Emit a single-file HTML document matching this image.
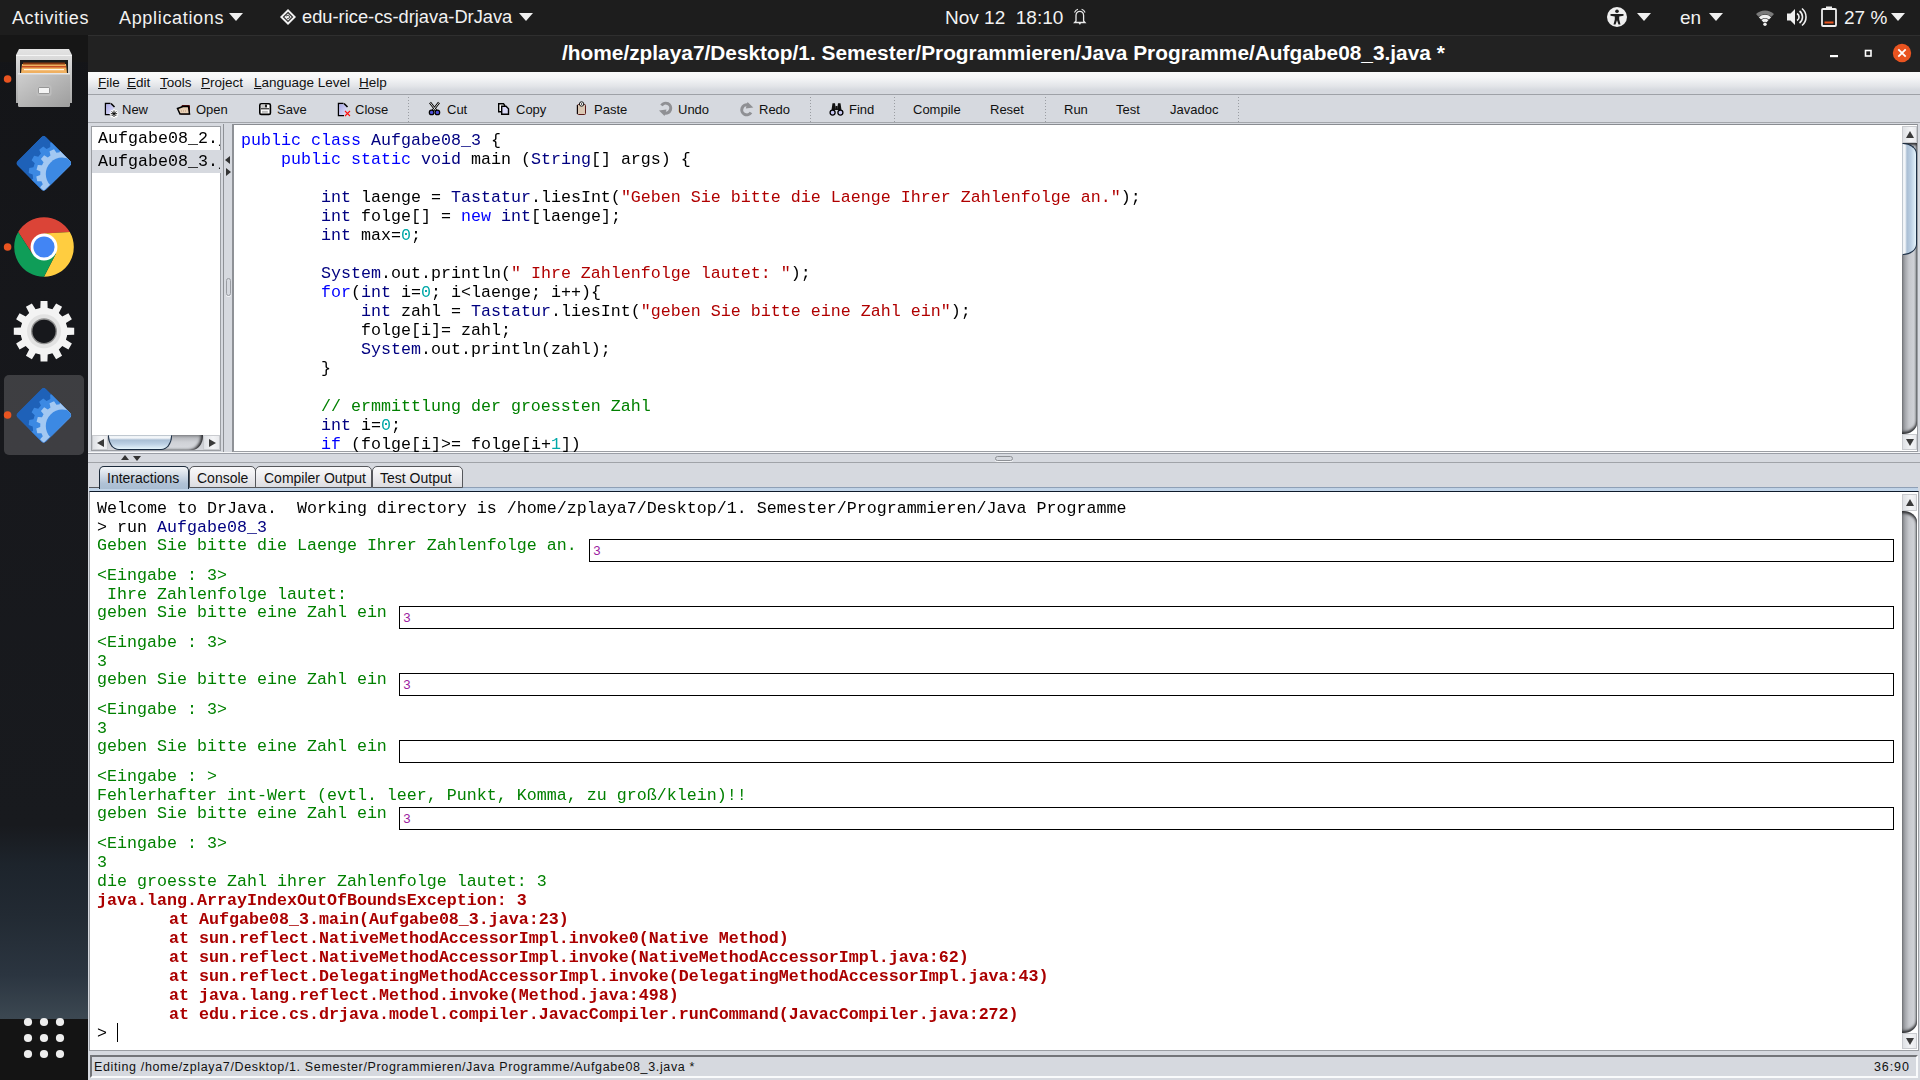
<!DOCTYPE html>
<html><head><meta charset="utf-8">
<style>
*{box-sizing:border-box;margin:0;padding:0}
html,body{width:1920px;height:1080px;overflow:hidden;background:#16171b;font-family:"Liberation Sans",sans-serif}
.a{position:absolute}
.t{position:absolute;white-space:pre;line-height:1}
#top{left:0;top:0;width:1920px;height:35px;background:#1d1d1d;color:#f2f2f2}
#dock{left:0;top:35px;width:88px;height:1045px;background:linear-gradient(#141518 0px,#17181c 400px,#181a1e 790px,#1d242c 830px,#222a33 880px,#2b3540 940px,#3c4852 984px)}
#title{left:88px;top:35px;width:1832px;height:37px;background:#222;border-top:1px solid #2f2f2f}
#win{left:88px;top:72px;width:1832px;height:1008px;background:#d6d9df}
.mono{font-family:"Liberation Mono",monospace;will-change:transform}
.tri{position:absolute;width:0;height:0;border-left:7px solid transparent;border-right:7px solid transparent;border-top:8px solid #f0f0f0}
.code{font-size:16.67px;line-height:19px;color:#000}
.code i,.ia i{font-style:normal}
i.k{color:#0000ff} i.y{color:#000080} i.s{color:#b00000} i.n{color:#00a8a8} i.c{color:#008000}
.ia{font-size:16.67px;line-height:19px;height:19px;color:#000}
i.g{color:#008000} i.r{color:#aa0000;font-weight:bold}
.ibox{height:23px;border:1px solid #000;background:#fff}
.ibox span{position:absolute;left:3px;top:4.5px;font-family:"Liberation Mono",monospace;font-size:13px;line-height:14px;color:#9b1aa0}
.tab{top:466px;height:22px;border:1px solid #55575b;border-radius:5px 5px 0 0;background:linear-gradient(#fafafb,#ececef 50%,#dcdde1)}
.tab.sel{height:23px;border-color:#1b2a3a;border-bottom:none;background:linear-gradient(#f4f6f8 0%,#d5dee8 35%,#b0c2d6 75%,#a9bdd2 100%)}
.sbbtn{background:linear-gradient(90deg,#dfe1e5,#f3f4f6 60%,#e9eaed);border:1px solid #c9cbcf}
.sbtrack.v{background:linear-gradient(90deg,#77797d 0,#a9abb0 3px,#c9cbd0 7px,#d5d7dc 100%)}
.sbtrack.h{background:linear-gradient(#77797d 0,#a9abb0 3px,#c9cbd0 7px,#d5d7dc 100%)}
.thumbv{border:1px solid #1c2f45;border-left:1px solid #c0c8d0;border-radius:0 14px 14px 0/0 11px 11px 0;background:linear-gradient(90deg,#eef2f6 0,#f4f7fa 2px,#a9bed4 4px,#bcd0e4 8px,#e6f4fb 100%)}
.thumbh{border:1px solid #1c2f45;border-top:1px solid #c0c8d0;border-radius:0 0 11px 11px/0 0 14px 14px;background:linear-gradient(#eef2f6 0,#f4f7fa 2px,#a9bed4 4px,#bcd0e4 8px,#e6f4fb 100%)}
.tu,.td,.tl,.tr{position:absolute;width:0;height:0}
.tu{left:3px;top:4px;border-left:4px solid transparent;border-right:4px solid transparent;border-bottom:7px solid #3a3a3a}
.td{left:3px;top:4px;border-left:4px solid transparent;border-right:4px solid transparent;border-top:7px solid #3a3a3a}
.tl{left:4px;top:3px;border-top:4px solid transparent;border-bottom:4px solid transparent;border-right:7px solid #3a3a3a}
.tr{left:5px;top:3px;border-top:4px solid transparent;border-bottom:4px solid transparent;border-left:7px solid #3a3a3a}
.chan{background:linear-gradient(90deg,#77797d 0,#a3a5aa 3px,#c6c8cd 7px,#d5d7dc 100%);box-shadow:inset -1px 3px 3px -1px #2a2b2e, inset -1px -3px 3px -1px #2a2b2e}
</style></head><body>
<!-- TOP BAR -->
<div id="top" class="a">
  <div class="t" style="left:12px;top:9px;font-size:18px;letter-spacing:0.6px">Activities</div>
  <div class="t" style="left:119px;top:9px;font-size:18px;letter-spacing:0.67px">Applications</div>
  <div class="tri" style="left:229px;top:13px"></div>
  <div class="t" style="left:302px;top:8px;font-size:18.3px">edu-rice-cs-drjava-DrJava</div>
  <div class="tri" style="left:519px;top:13px"></div>
  <div class="t" style="left:945px;top:8px;font-size:19px">Nov 12  18:10</div>
  <div class="t" style="left:1680px;top:8px;font-size:19px">en</div>
  <div class="tri" style="left:1637px;top:13px"></div>
  <div class="tri" style="left:1709px;top:13px"></div>
  <div class="t" style="left:1844px;top:8px;font-size:19px">27 %</div>
  <div class="tri" style="left:1891px;top:13px"></div>
</div>
<div id="dock" class="a"></div>
<div class="a" style="left:0;top:35px;width:88px;height:27px;background:#161616"></div>
<svg class="a" style="left:0;top:35px" width="88" height="1045" viewBox="0 35 88 1045">
<rect x="4" y="375" width="80" height="80" rx="5" fill="#ffffff" fill-opacity="0.17"/>
<circle cx="7.6" cy="79" r="3.8" fill="#e95420"/>
<circle cx="7.6" cy="247" r="3.8" fill="#e95420"/>
<circle cx="7.6" cy="415" r="3.8" fill="#e95420"/>
<defs><linearGradient id="cab" x1="0" y1="0" x2="0" y2="1"><stop offset="0" stop-color="#e4e4e4"/><stop offset="1" stop-color="#a9a9a9"/></linearGradient>
<linearGradient id="drw" x1="0" y1="0" x2="1" y2="1"><stop offset="0" stop-color="#cfcfcf"/><stop offset="1" stop-color="#9d9d9d"/></linearGradient></defs>
<path d="M19 49 H69 L72 55 V103 H16 V55 Z" fill="url(#cab)"/>
<rect x="16" y="55" width="56" height="1" fill="#f4f4f4"/>
<rect x="20" y="60" width="48" height="13" fill="#1b1b1b"/>
<path d="M22 64 H66 L67 73 H21 Z" fill="#f0b060"/>
<rect x="23" y="62.5" width="42" height="2" fill="#8a3a10"/>
<rect x="22" y="66" width="44" height="1.5" fill="#c64a20"/>
<rect x="24" y="69" width="40" height="1.2" fill="#fff7e8"/>
<rect x="18" y="73" width="52" height="34" rx="1.5" fill="url(#drw)"/>
<rect x="18" y="73" width="52" height="1.5" fill="#e6e6e6"/>
<rect x="36.5" y="85" width="15" height="11" rx="2.5" fill="#bdbdbd"/>
<rect x="38.5" y="87.5" width="11" height="6" rx="1" fill="#f4f4f4" stroke="#6a6a6a" stroke-width="0.6"/>
<clipPath id="dm1"><rect x="23.45" y="142.95" width="40.50" height="40.50" rx="3.5" transform="rotate(45 43.70 163.20)"/></clipPath><g clip-path="url(#dm1)"><rect x="23.45" y="142.95" width="40.50" height="40.50" rx="3.5" transform="rotate(45 43.70 163.20)" fill="#1e61b8"/><path d="M61.58 144.51 L63.08 140.51 L68.30 141.06 L68.94 145.28 L72.92 146.52 L75.83 143.40 L80.45 145.90 L79.41 150.04 L82.62 152.71 L86.50 150.94 L89.81 155.03 L87.27 158.45 L89.21 162.14 L93.47 161.99 L94.97 167.03 L91.31 169.23 L91.69 173.38 L95.69 174.88 L95.14 180.10 L90.92 180.74 L89.68 184.72 L92.80 187.63 L90.30 192.25 L86.16 191.21 L83.49 194.42 L85.26 198.30 L81.17 201.61 L77.75 199.07 L74.06 201.01 L74.21 205.27 L69.17 206.77 L66.97 203.11 L62.82 203.49 L61.32 207.49 L56.10 206.94 L55.46 202.72 L51.48 201.48 L48.57 204.60 L43.95 202.10 L44.99 197.96 L41.78 195.29 L37.90 197.06 L34.59 192.97 L37.13 189.55 L35.19 185.86 L30.93 186.01 L29.43 180.97 L33.09 178.77 L32.71 174.62 L28.71 173.12 L29.26 167.90 L33.48 167.26 L34.72 163.28 L31.60 160.37 L34.10 155.75 L38.24 156.79 L40.91 153.58 L39.14 149.70 L43.23 146.39 L46.65 148.93 L50.34 146.99 L50.19 142.73 L55.23 141.23 L57.43 144.89 Z" fill="#3c89e3"/><path d="M59.71 152.14 L60.61 148.05 L65.59 148.22 L66.21 152.37 L69.44 153.23 L72.03 149.93 L76.44 152.25 L75.20 156.25 L77.74 158.42 L81.50 156.58 L84.47 160.58 L81.61 163.65 L82.96 166.71 L87.15 166.68 L88.09 171.57 L84.18 173.10 L84.06 176.44 L87.85 178.23 L86.58 183.04 L82.40 182.72 L80.84 185.68 L83.48 188.94 L80.24 192.73 L76.61 190.62 L73.93 192.61 L74.89 196.69 L70.33 198.70 L67.97 195.23 L64.69 195.86 L63.79 199.95 L58.81 199.78 L58.19 195.63 L54.96 194.77 L52.37 198.07 L47.96 195.75 L49.20 191.75 L46.66 189.58 L42.90 191.42 L39.93 187.42 L42.79 184.35 L41.44 181.29 L37.25 181.32 L36.31 176.43 L40.22 174.90 L40.34 171.56 L36.55 169.77 L37.82 164.96 L42.00 165.28 L43.56 162.32 L40.92 159.06 L44.16 155.27 L47.79 157.38 L50.47 155.39 L49.51 151.31 L54.07 149.30 L56.43 152.77 Z" fill="#a3c8f2"/><circle cx="62.2" cy="174.0" r="16.4" fill="#3c89e3"/><path d="M13.7 164.4 L43.7 192.4 L73.7 164.4" fill="none" stroke="#2d70c9" stroke-width="2.4"/></g>
<path d="M18.19 232.10 A29.8 29.8 0 0 1 69.81 232.10 L44.00 233.40 L44 247 L32.22 253.80 Z" fill="#db4437"/><path d="M69.81 232.10 A29.8 29.8 0 0 1 44.00 276.80 L55.78 253.80 L44 247 L44.00 233.40 Z" fill="#ffcd40"/><path d="M44.00 276.80 A29.8 29.8 0 0 1 18.19 232.10 L32.22 253.80 L44 247 L55.78 253.80 Z" fill="#0f9d58"/><circle cx="44" cy="247" r="13.4" fill="#fff"/><circle cx="44" cy="247" r="10.6" fill="#4285f4"/>
<path d="M40.32 308.09 L40.56 301.10 L47.44 301.10 L47.68 308.09 L52.42 309.36 L56.12 303.42 L62.08 306.86 L58.79 313.04 L62.26 316.51 L68.44 313.22 L71.88 319.18 L65.94 322.88 L67.21 327.62 L74.20 327.86 L74.20 334.74 L67.21 334.98 L65.94 339.72 L71.88 343.42 L68.44 349.38 L62.26 346.09 L58.79 349.56 L62.08 355.74 L56.12 359.18 L52.42 353.24 L47.68 354.51 L47.44 361.50 L40.56 361.50 L40.32 354.51 L35.58 353.24 L31.88 359.18 L25.92 355.74 L29.21 349.56 L25.74 346.09 L19.56 349.38 L16.12 343.42 L22.06 339.72 L20.79 334.98 L13.80 334.74 L13.80 327.86 L20.79 327.62 L22.06 322.88 L16.12 319.18 L19.56 313.22 L25.74 316.51 L29.21 313.04 L25.92 306.86 L31.88 303.42 L35.58 309.36 Z" fill="#f3f3f3"/>
<circle cx="44" cy="331.3" r="23" fill="#f3f3f3"/>
<circle cx="44" cy="331.3" r="17" fill="#e2e2e2"/>
<circle cx="44" cy="331.3" r="13" fill="#8e8e8e"/>
<circle cx="44" cy="331.3" r="11.6" fill="#17181c"/>
<clipPath id="dm2"><rect x="23.45" y="394.95" width="40.50" height="40.50" rx="3.5" transform="rotate(45 43.70 415.20)"/></clipPath><g clip-path="url(#dm2)"><rect x="23.45" y="394.95" width="40.50" height="40.50" rx="3.5" transform="rotate(45 43.70 415.20)" fill="#1e61b8"/><path d="M61.58 396.51 L63.08 392.51 L68.30 393.06 L68.94 397.28 L72.92 398.52 L75.83 395.40 L80.45 397.90 L79.41 402.04 L82.62 404.71 L86.50 402.94 L89.81 407.03 L87.27 410.45 L89.21 414.14 L93.47 413.99 L94.97 419.03 L91.31 421.23 L91.69 425.38 L95.69 426.88 L95.14 432.10 L90.92 432.74 L89.68 436.72 L92.80 439.63 L90.30 444.25 L86.16 443.21 L83.49 446.42 L85.26 450.30 L81.17 453.61 L77.75 451.07 L74.06 453.01 L74.21 457.27 L69.17 458.77 L66.97 455.11 L62.82 455.49 L61.32 459.49 L56.10 458.94 L55.46 454.72 L51.48 453.48 L48.57 456.60 L43.95 454.10 L44.99 449.96 L41.78 447.29 L37.90 449.06 L34.59 444.97 L37.13 441.55 L35.19 437.86 L30.93 438.01 L29.43 432.97 L33.09 430.77 L32.71 426.62 L28.71 425.12 L29.26 419.90 L33.48 419.26 L34.72 415.28 L31.60 412.37 L34.10 407.75 L38.24 408.79 L40.91 405.58 L39.14 401.70 L43.23 398.39 L46.65 400.93 L50.34 398.99 L50.19 394.73 L55.23 393.23 L57.43 396.89 Z" fill="#3c89e3"/><path d="M59.71 404.14 L60.61 400.05 L65.59 400.22 L66.21 404.37 L69.44 405.23 L72.03 401.93 L76.44 404.25 L75.20 408.25 L77.74 410.42 L81.50 408.58 L84.47 412.58 L81.61 415.65 L82.96 418.71 L87.15 418.68 L88.09 423.57 L84.18 425.10 L84.06 428.44 L87.85 430.23 L86.58 435.04 L82.40 434.72 L80.84 437.68 L83.48 440.94 L80.24 444.73 L76.61 442.62 L73.93 444.61 L74.89 448.69 L70.33 450.70 L67.97 447.23 L64.69 447.86 L63.79 451.95 L58.81 451.78 L58.19 447.63 L54.96 446.77 L52.37 450.07 L47.96 447.75 L49.20 443.75 L46.66 441.58 L42.90 443.42 L39.93 439.42 L42.79 436.35 L41.44 433.29 L37.25 433.32 L36.31 428.43 L40.22 426.90 L40.34 423.56 L36.55 421.77 L37.82 416.96 L42.00 417.28 L43.56 414.32 L40.92 411.06 L44.16 407.27 L47.79 409.38 L50.47 407.39 L49.51 403.31 L54.07 401.30 L56.43 404.77 Z" fill="#a3c8f2"/><circle cx="62.2" cy="426.0" r="16.4" fill="#3c89e3"/><path d="M13.7 416.4 L43.7 444.4 L73.7 416.4" fill="none" stroke="#2d70c9" stroke-width="2.4"/></g>
<rect x="0" y="1019" width="88" height="61" fill="#141414"/>
<circle cx="28" cy="1022" r="4.1" fill="#eeeeee"/>
<circle cx="44" cy="1022" r="4.1" fill="#eeeeee"/>
<circle cx="60" cy="1022" r="4.1" fill="#eeeeee"/>
<circle cx="28" cy="1038" r="4.1" fill="#eeeeee"/>
<circle cx="44" cy="1038" r="4.1" fill="#eeeeee"/>
<circle cx="60" cy="1038" r="4.1" fill="#eeeeee"/>
<circle cx="28" cy="1054" r="4.1" fill="#eeeeee"/>
<circle cx="44" cy="1054" r="4.1" fill="#eeeeee"/>
<circle cx="60" cy="1054" r="4.1" fill="#eeeeee"/>
</svg>
<div id="title" class="a">
  <div class="t" style="left:474px;top:7px;font-size:20.85px;font-weight:bold;color:#fff">/home/zplaya7/Desktop/1. Semester/Programmieren/Java Programme/Aufgabe08_3.java *</div>
</div>
<div id="win" class="a">
</div>
<div class="a" style="left:88px;top:72px;width:1832px;height:22px;background:linear-gradient(#fafbfb 0,#f6f7f8 25%,#e2e4e8 65%,#d6d9df 82%,#d6d9df 100%)"></div>
<div class="a" style="left:88px;top:94px;width:1832px;height:1px;background:#9ea1a7"></div>
<div class="t" style="left:98px;top:76px;font-size:13.5px;color:#111"><u>F</u>ile</div>
<div class="t" style="left:127px;top:76px;font-size:13.5px;color:#111"><u>E</u>dit</div>
<div class="t" style="left:160px;top:76px;font-size:13.5px;color:#111"><u>T</u>ools</div>
<div class="t" style="left:201px;top:76px;font-size:13.5px;color:#111"><u>P</u>roject</div>
<div class="t" style="left:254px;top:76px;font-size:13.5px;color:#111"><u>L</u>anguage Level</div>
<div class="t" style="left:359px;top:76px;font-size:13.5px;color:#111"><u>H</u>elp</div>
<div class="a" style="left:88px;top:122px;width:1832px;height:1px;background:#a3a6ab"></div>
<div class="a" style="left:408px;top:97px;width:1px;height:25px;background:repeating-linear-gradient(#9a9da2 0 1px,transparent 1px 3px)"></div>
<div class="a" style="left:810px;top:97px;width:1px;height:25px;background:repeating-linear-gradient(#9a9da2 0 1px,transparent 1px 3px)"></div>
<div class="a" style="left:894px;top:97px;width:1px;height:25px;background:repeating-linear-gradient(#9a9da2 0 1px,transparent 1px 3px)"></div>
<div class="a" style="left:1045px;top:97px;width:1px;height:25px;background:repeating-linear-gradient(#9a9da2 0 1px,transparent 1px 3px)"></div>
<div class="a" style="left:1238px;top:97px;width:1px;height:25px;background:repeating-linear-gradient(#9a9da2 0 1px,transparent 1px 3px)"></div>
<div class="t" style="left:122px;top:103px;font-size:13px;color:#111">New</div>
<div class="t" style="left:196px;top:103px;font-size:13px;color:#111">Open</div>
<div class="t" style="left:277px;top:103px;font-size:13px;color:#111">Save</div>
<div class="t" style="left:355px;top:103px;font-size:13px;color:#111">Close</div>
<div class="t" style="left:447px;top:103px;font-size:13px;color:#111">Cut</div>
<div class="t" style="left:516px;top:103px;font-size:13px;color:#111">Copy</div>
<div class="t" style="left:594px;top:103px;font-size:13px;color:#111">Paste</div>
<div class="t" style="left:678px;top:103px;font-size:13px;color:#111">Undo</div>
<div class="t" style="left:759px;top:103px;font-size:13px;color:#111">Redo</div>
<div class="t" style="left:849px;top:103px;font-size:13px;color:#111">Find</div>
<div class="t" style="left:913px;top:103px;font-size:13px;color:#111">Compile</div>
<div class="t" style="left:990px;top:103px;font-size:13px;color:#111">Reset</div>
<div class="t" style="left:1064px;top:103px;font-size:13px;color:#111">Run</div>
<div class="t" style="left:1116px;top:103px;font-size:13px;color:#111">Test</div>
<div class="t" style="left:1170px;top:103px;font-size:13px;color:#111">Javadoc</div>
<div class="a" style="left:91px;top:126px;width:130px;height:325px;border:1px solid #9b9ea3;background:#fff"></div>
<div class="a" style="left:92px;top:150px;width:129px;height:23px;background:#d6d9df"></div>
<div class="a" style="left:92px;top:127px;width:128px;height:300px;overflow:hidden"><div class="t mono" style="left:6px;top:4px;font-size:16.67px;color:#000">Aufgabe08_2.java</div><div class="t mono" style="left:6px;top:27px;font-size:16.67px;color:#000">Aufgabe08_3.java</div></div>

<div class="a" style="left:223px;top:124px;width:1px;height:329px;background:#8e9196"></div>
<div class="a" style="left:226px;top:278px;width:5px;height:18px;border:1px solid #9a9da3;border-radius:3px;box-shadow:0 1px 0 #f4f5f7"></div>
<div class="a" style="left:995px;top:456px;width:18px;height:5px;border:1px solid #8e9196;border-radius:3px;box-shadow:0 1px 0 #f4f5f7"></div>
<div class="a" style="left:232px;top:124px;width:1686px;height:328px;border:1px solid #9b9ea3;border-left:2px solid #8e9196;border-top-color:#8a8d92;background:#fff"></div>
<div class="a" style="left:88px;top:452px;width:1832px;height:1px;background:#f7f8f9"></div>
<div class="a" style="left:88px;top:453px;width:1832px;height:1px;background:#9a9ea6"></div>
<div class="a" style="left:88px;top:462px;width:1832px;height:1px;background:#a0a3a8"></div>
<div class="a" style="left:89px;top:491px;width:1830px;height:560px;border:1px solid #9b9ea3;border-top:1px solid #0f1b2b;background:#fff"></div>
<div class="a" style="left:90px;top:1055px;width:1828px;height:23px;border-top:2px solid #737579;border-left:2px solid #737579;border-right:2px solid #f9fafb;border-bottom:2px solid #f9fafb;background:#d6d9df"></div>

<div class="t" style="left:94px;top:1061px;font-size:12.5px;letter-spacing:0.64px;color:#111">Editing /home/zplaya7/Desktop/1. Semester/Programmieren/Java Programme/Aufgabe08_3.java *</div>
<div class="t" style="left:1874px;top:1061px;font-size:12.5px;letter-spacing:0.9px;color:#111">36:90</div>
<div class="a" style="left:233px;top:125px;width:1669px;height:327px;overflow:hidden"><pre class="mono code" style="position:absolute;left:8px;top:6px"><i class="k">public</i> <i class="k">class</i> <i class="y">Aufgabe08_3</i> {
    <i class="k">public</i> <i class="k">static</i> <i class="y">void</i> main (<i class="y">String</i>[] args) {

        <i class="y">int</i> laenge = <i class="y">Tastatur</i>.liesInt(<i class="s">"Geben Sie bitte die Laenge Ihrer Zahlenfolge an."</i>);
        <i class="y">int</i> folge[] = <i class="k">new</i> <i class="y">int</i>[laenge];
        <i class="y">int</i> max=<i class="n">0</i>;

        <i class="y">System</i>.out.println(<i class="s">" Ihre Zahlenfolge lautet: "</i>);
        <i class="k">for</i>(<i class="y">int</i> i=<i class="n">0</i>; i&lt;laenge; i++){
            <i class="y">int</i> zahl = <i class="y">Tastatur</i>.liesInt(<i class="s">"geben Sie bitte eine Zahl ein"</i>);
            folge[i]= zahl;
            <i class="y">System</i>.out.println(zahl);
        }

        <i class="c">// ermmittlung der groessten Zahl</i>
        <i class="y">int</i> i=<i class="n">0</i>;
        <i class="k">if</i> (folge[i]&gt;= folge[i+<i class="n">1</i>])</pre></div>
<div class="t mono ia" style="left:97px;top:499px">Welcome to DrJava.  Working directory is /home/zplaya7/Desktop/1. Semester/Programmieren/Java Programme</div>
<div class="t mono ia" style="left:97px;top:518px">&gt; run <i class="y">Aufgabe08_3</i></div>
<div class="t mono ia" style="left:97px;top:536px"><i class="g">Geben Sie bitte die Laenge Ihrer Zahlenfolge an.</i></div>
<div class="a ibox" style="left:589px;top:539px;width:1305px"><span>3</span></div>
<div class="t mono ia" style="left:97px;top:566px"><i class="g">&lt;Eingabe : 3&gt;</i></div>
<div class="t mono ia" style="left:97px;top:585px"><i class="g"> Ihre Zahlenfolge lautet: </i></div>
<div class="t mono ia" style="left:97px;top:603px"><i class="g">geben Sie bitte eine Zahl ein </i></div>
<div class="a ibox" style="left:399px;top:606px;width:1495px"><span>3</span></div>
<div class="t mono ia" style="left:97px;top:633px"><i class="g">&lt;Eingabe : 3&gt;</i></div>
<div class="t mono ia" style="left:97px;top:652px"><i class="g">3</i></div>
<div class="t mono ia" style="left:97px;top:670px"><i class="g">geben Sie bitte eine Zahl ein </i></div>
<div class="a ibox" style="left:399px;top:673px;width:1495px"><span>3</span></div>
<div class="t mono ia" style="left:97px;top:700px"><i class="g">&lt;Eingabe : 3&gt;</i></div>
<div class="t mono ia" style="left:97px;top:719px"><i class="g">3</i></div>
<div class="t mono ia" style="left:97px;top:737px"><i class="g">geben Sie bitte eine Zahl ein </i></div>
<div class="a ibox" style="left:399px;top:740px;width:1495px"><span></span></div>
<div class="t mono ia" style="left:97px;top:767px"><i class="g">&lt;Eingabe : &gt;</i></div>
<div class="t mono ia" style="left:97px;top:786px"><i class="g">Fehlerhafter int-Wert (evtl. leer, Punkt, Komma, zu groß/klein)!!</i></div>
<div class="t mono ia" style="left:97px;top:804px"><i class="g">geben Sie bitte eine Zahl ein </i></div>
<div class="a ibox" style="left:399px;top:807px;width:1495px"><span>3</span></div>
<div class="t mono ia" style="left:97px;top:834px"><i class="g">&lt;Eingabe : 3&gt;</i></div>
<div class="t mono ia" style="left:97px;top:853px"><i class="g">3</i></div>
<div class="t mono ia" style="left:97px;top:872px"><i class="g">die groesste Zahl ihrer Zahlenfolge lautet: 3</i></div>
<div class="t mono ia" style="left:97px;top:891px"><i class="r">java.lang.ArrayIndexOutOfBoundsException: 3</i></div>
<div class="t mono ia" style="left:97px;top:910px"><i class="r"><span style="display:inline-block;width:72px"></span>at Aufgabe08_3.main(Aufgabe08_3.java:23)</i></div>
<div class="t mono ia" style="left:97px;top:929px"><i class="r"><span style="display:inline-block;width:72px"></span>at sun.reflect.NativeMethodAccessorImpl.invoke0(Native Method)</i></div>
<div class="t mono ia" style="left:97px;top:948px"><i class="r"><span style="display:inline-block;width:72px"></span>at sun.reflect.NativeMethodAccessorImpl.invoke(NativeMethodAccessorImpl.java:62)</i></div>
<div class="t mono ia" style="left:97px;top:967px"><i class="r"><span style="display:inline-block;width:72px"></span>at sun.reflect.DelegatingMethodAccessorImpl.invoke(DelegatingMethodAccessorImpl.java:43)</i></div>
<div class="t mono ia" style="left:97px;top:986px"><i class="r"><span style="display:inline-block;width:72px"></span>at java.lang.reflect.Method.invoke(Method.java:498)</i></div>
<div class="t mono ia" style="left:97px;top:1005px"><i class="r"><span style="display:inline-block;width:72px"></span>at edu.rice.cs.drjava.model.compiler.JavacCompiler.runCommand(JavacCompiler.java:272)</i></div>
<div class="t mono ia" style="left:97px;top:1024px">&gt; </div>
<div class="a" style="left:117px;top:1023px;width:1px;height:19px;background:#000"></div>
<div class="a" style="left:89px;top:487px;width:1829px;height:4px;background:linear-gradient(#8fa0b6 0,#8fa0b6 1px,#bfd2e6 1px,#c3d6ea 100%)"></div>
<div class="a" style="left:89px;top:487px;width:11px;height:1px;background:#55575b"></div>
<div class="a tab sel" style="left:99px;width:90px"></div>
<div class="t" style="left:107px;top:471px;font-size:14px;color:#111">Interactions</div>
<div class="a tab" style="left:189px;width:67px"></div>
<div class="t" style="left:197px;top:471px;font-size:14px;color:#111">Console</div>
<div class="a tab" style="left:255px;width:117px"></div>
<div class="t" style="left:264px;top:471px;font-size:14px;color:#111">Compiler Output</div>
<div class="a tab" style="left:372px;width:91px"></div>
<div class="t" style="left:380px;top:471px;font-size:14px;color:#111">Test Output</div>
<div class="a chan" style="left:1902px;top:143px;width:15px;height:291px;border-radius:0 0 14px 0/0 0 11px 0"></div>
<div class="a sbbtn" style="left:1902px;top:126px;width:15px;height:17px"><div class="tu"></div></div>
<div class="a sbbtn" style="left:1902px;top:434px;width:15px;height:16px"><div class="td"></div></div>
<div class="a thumbv" style="left:1902px;top:143px;width:15px;height:112px"></div>
<div class="a chan" style="left:1902px;top:511px;width:15px;height:522px;border-radius:0 14px 14px 0/0 11px 11px 0"></div>
<div class="a sbbtn" style="left:1902px;top:494px;width:15px;height:17px"><div class="tu"></div></div>
<div class="a sbbtn" style="left:1902px;top:1033px;width:15px;height:16px"><div class="td"></div></div>
<div class="a sbtrack h" style="left:92px;top:435px;width:128px;height:15px"></div>
<div class="a sbbtn" style="left:92px;top:435px;width:16px;height:15px"><div class="tl"></div></div>
<div class="a sbbtn" style="left:203px;top:435px;width:17px;height:15px"><div class="tr"></div></div>

<div class="a" style="left:160px;top:435px;width:43px;height:15px;border-radius:0 0 11px 0/0 0 14px 0;box-shadow:inset -3px -1px 3px -1px #2a2b2e;background:linear-gradient(#86888c 0,#b9bbc0 3px,#cfd1d6 7px,#d9dbe0 100%)"></div>
<div class="a thumbh" style="left:108px;top:435px;width:64px;height:15px"></div>
<div class="a" style="left:225px;top:156px;width:0;height:0;border-top:4px solid transparent;border-bottom:4px solid transparent;border-right:5px solid #333"></div>
<div class="a" style="left:226px;top:168px;width:0;height:0;border-top:4px solid transparent;border-bottom:4px solid transparent;border-left:5px solid #333"></div>
<div class="a" style="left:121px;top:455px;width:0;height:0;border-left:4px solid transparent;border-right:4px solid transparent;border-bottom:5px solid #333"></div>
<div class="a" style="left:133px;top:456px;width:0;height:0;border-left:4px solid transparent;border-right:4px solid transparent;border-top:5px solid #333"></div>
<svg class="a" style="left:0;top:0" width="900" height="125" viewBox="0 0 900 125">
<defs>
<linearGradient id="docg" x1="0" y1="0" x2="1" y2="1"><stop offset="0" stop-color="#a9a9e6"/><stop offset="1" stop-color="#e4e4fb"/></linearGradient>
</defs>
<!-- New -->
<path d="M111 114.5 H105.5 V103.5 H110.5" fill="none" stroke="#000" stroke-width="1.4"/>
<path d="M106.2 104.2 H111 L113.8 107.5 V111 L111 114 H106.2 Z" fill="url(#docg)"/>
<path d="M111 103.5 L114.5 107" stroke="#000" stroke-width="1.6"/>
<g stroke="#fff" stroke-width="2.6" stroke-linecap="round"><path d="M114 110.5 V117 M110.8 113.7 H117.2 M111.7 111.4 L116.3 116 M116.3 111.4 L111.7 116"/></g><g stroke="#000" stroke-width="0.9"><path d="M114 110.5 V117 M110.8 113.7 H117.2 M111.7 111.4 L116.3 116 M116.3 111.4 L111.7 116"/></g>
<!-- Open -->
<path d="M182 105.5 H189.5 V114 H181 Z" fill="#f6e4d2" stroke="#5a1010" stroke-width="1"/>
<path d="M177.5 108.5 L183 106.5 H188.5 L189.5 114 H180 Z" fill="#e9cfb4" stroke="#000" stroke-width="1.5"/>
<path d="M181 111 H187" stroke="#b89b7e" stroke-width="1.2" stroke-dasharray="1 1"/>
<!-- Save -->
<rect x="259.8" y="103.8" width="10.6" height="10.6" rx="1.5" fill="#fff" stroke="#000" stroke-width="1.6"/>
<rect x="261.2" y="104.5" width="6" height="3.6" fill="#c8c8c8"/>
<rect x="265.2" y="104.5" width="1.6" height="2.8" fill="#000"/>
<path d="M261 108.8 H269.2" stroke="#000" stroke-width="1"/>
<rect x="262" y="110.8" width="5.8" height="2" fill="#bdbdbd"/>
<!-- Close -->
<path d="M344 115.5 H338.5 V103.5 H343.5" fill="none" stroke="#000" stroke-width="1.4"/>
<path d="M339.2 104.2 H344 L346.8 107.5 V111 L344 115 H339.2 Z" fill="url(#docg)"/>
<path d="M344 103.5 L347.5 107" stroke="#000" stroke-width="1.6"/>
<path d="M345 111 L350 116 M350 111 L345 116" stroke="#ff1010" stroke-width="1.1"/>
<!-- Cut -->
<path d="M430 102.5 L436.5 111 M439 102.5 L432.5 111" stroke="#000" stroke-width="2.4"/>
<path d="M430 102.5 L436.5 111 M439 102.5 L432.5 111" stroke="#fff" stroke-width="0.8"/>
<circle cx="431.6" cy="112.4" r="2.3" fill="#5050d8" stroke="#000" stroke-width="1.2"/>
<circle cx="437.4" cy="112.4" r="2.3" fill="#5050d8" stroke="#000" stroke-width="1.2"/>
<!-- Copy -->
<path d="M498.7 103.7 H503.5 L504.5 105 V111.8 H498.7 Z" fill="#fff" stroke="#000" stroke-width="1.4"/>
<path d="M501.7 106.2 H506 L508.5 108.7 V114.2 H501.7 Z" fill="#d9d9f6" stroke="#000" stroke-width="1.4"/>
<!-- Paste -->
<rect x="577.5" y="104.5" width="8" height="10" rx="1" fill="#dbc8b4" stroke="#5a1a1a" stroke-width="1"/>
<path d="M577.3 105 V114" stroke="#000" stroke-width="1"/>
<circle cx="581.6" cy="104" r="2.2" fill="#fff" stroke="#000" stroke-width="0.9"/>
<circle cx="581.6" cy="104" r="0.7" fill="#000"/>
<!-- Undo -->
<path d="M661.5 105.5 A5 5 0 1 1 664.5 113" fill="none" stroke="#8f9094" stroke-width="3"/>
<path d="M659 110.5 L664.5 116 L666.5 109.5 Z" fill="#8f9094"/>
<!-- Redo -->
<path d="M751 112.5 A5 5 0 1 1 748 105" fill="none" stroke="#8f9094" stroke-width="3"/>
<path d="M753.3 107.5 L747.5 102 L745.8 108.5 Z" fill="#8f9094"/>
<!-- Find -->
<path d="M831.5 110 L832.5 103.2 H835 L836 110 Z M837 110 L838 103.2 H840.5 L841.5 110 Z" fill="#111"/>
<circle cx="832.6" cy="112.6" r="2.5" fill="#c8c8f4" stroke="#000" stroke-width="1.3"/>
<circle cx="840.4" cy="112.6" r="2.5" fill="#c8c8f4" stroke="#000" stroke-width="1.3"/>
<rect x="835.5" y="106" width="2" height="4" fill="#111"/>
</svg>
<svg class="a" style="left:0;top:0" width="1920" height="72" viewBox="0 0 1920 72">
<!-- app icon -->
<path d="M288 9 L296 17 L288 25 L280 17 Z" fill="#f4f4f4"/>
<path d="M288 12.5 L292.5 17 L288 21.5 L283.5 17 Z" fill="none" stroke="#333" stroke-width="1.2"/>
<path d="M286 16 L288.5 15 L290 17.5 L287 19" fill="none" stroke="#333" stroke-width="0.9"/>
<!-- bell -->
<path d="M1076 21 V15.5 A3.8 4.2 0 0 1 1083.6 15.5 V21 L1085 22.5 H1074.6 Z" fill="none" stroke="#e8e8e8" stroke-width="1.3"/>
<path d="M1074.5 12.5 A6 6 0 0 1 1078 9.3 M1085.1 12.5 A6 6 0 0 0 1081.6 9.3" fill="none" stroke="#e8e8e8" stroke-width="1.1"/>
<circle cx="1079.8" cy="23.6" r="1" fill="#e8e8e8"/>
<!-- accessibility -->
<circle cx="1617" cy="17" r="10" fill="#eeeeee"/>
<circle cx="1617" cy="11.3" r="1.8" fill="#1d1d1d"/>
<path d="M1610.5 14 H1623.5 V15.8 L1619.2 16.6 V19.5 L1620.5 24.5 H1618.5 L1617 20.3 L1615.5 24.5 H1613.5 L1614.8 19.5 V16.6 L1610.5 15.8 Z" fill="#1d1d1d"/>
<!-- wifi -->
<path d="M1756 14 A13 13 0 0 1 1774 14 L1771.5 16.8 A9.5 9.5 0 0 0 1758.5 16.8 Z" fill="#7a7a7a"/>
<path d="M1758.8 17.2 A9.2 9.2 0 0 1 1771.2 17.2 L1769 19.6 A6 6 0 0 0 1761 19.6 Z" fill="#f0f0f0"/>
<path d="M1761.4 20 A5.6 5.6 0 0 1 1768.6 20 L1766.6 22.2 A2.8 2.8 0 0 0 1763.4 22.2 Z" fill="#f0f0f0"/>
<circle cx="1765" cy="24.2" r="1.7" fill="#f0f0f0"/>
<!-- volume -->
<path d="M1787 13.5 H1790.5 L1795 9 V25 L1790.5 20.5 H1787 Z" fill="#f0f0f0"/>
<path d="M1797 13.5 A4 4 0 0 1 1797 20.5 M1799.5 11 A7.5 7.5 0 0 1 1799.5 23 M1802 8.5 A11 11 0 0 1 1802 25.5" fill="none" stroke="#f0f0f0" stroke-width="1.6"/>
<!-- battery -->
<rect x="1822" y="9" width="14" height="17" rx="1" fill="none" stroke="#f0f0f0" stroke-width="1.8"/>
<rect x="1826" y="6.5" width="6" height="2.5" fill="#f0f0f0"/>
<rect x="1824.5" y="21.5" width="9" height="2" fill="#e95420"/>
<!-- window controls -->
<rect x="1830" y="55" width="8" height="2.2" fill="#fff"/>
<rect x="1865.5" y="50.5" width="5.5" height="5.5" fill="none" stroke="#fff" stroke-width="1.6"/>
<circle cx="1902" cy="53" r="9.2" fill="#e95420"/>
<path d="M1898.3 49.3 L1905.7 56.7 M1905.7 49.3 L1898.3 56.7" stroke="#fff" stroke-width="1.8"/>
</svg>
</body></html>
